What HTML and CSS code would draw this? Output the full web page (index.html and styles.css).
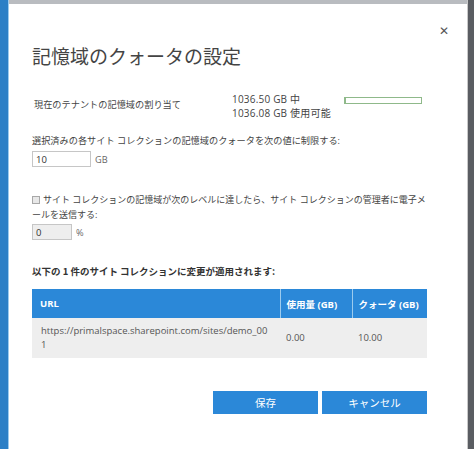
FILE: index.html
```html
<!DOCTYPE html>
<html lang="ja">
<head>
  <meta charset="UTF-8" />
  <title>記憶域のクォータの設定</title>
  <link rel="stylesheet" href="styles.css">
</head>
<body>
  <div class="edge-left"></div>
  <div class="center">
    <div class="top-strip"></div>
    <div class="dialog">
      <button class="close">&#x2715;</button>
      <h1>記憶域のクォータの設定</h1>

      <div class="tenant-row">
        <div class="tenant-label">現在のテナントの記憶域の割り当て</div>
        <div class="tenant-values">
          <div>1036.50 GB 中</div>
          <div>1036.08 GB 使用可能</div>
        </div>
        <div class="usage-bar"><div class="usage-fill"></div></div>
      </div>

      <label class="field-label">選択済みの各サイト コレクションの記憶域のクォータを次の値に制限する:</label>
      <div class="field-row">
        <input type="text" class="quota-input" value="10" />
        <span class="unit">GB</span>
      </div>

      <div class="check-text"><span class="check-box"></span>サイト コレクションの記憶域が次のレベルに達したら、サイト コレクションの管理者に電子メールを送信する:</div>
      <div class="field-row">
        <input type="text" class="warn-input" value="0" disabled />
        <span class="unit">%</span>
      </div>

      <h2>以下の 1 件のサイト コレクションに変更が適用されます:</h2>
      <table class="sites">
        <thead>
          <tr>
            <th class="col-url">URL</th>
            <th class="col-used">使用量 (GB)</th>
            <th class="col-quota">クォータ (GB)</th>
          </tr>
        </thead>
        <tbody>
          <tr>
            <td class="url-cell">https://primalspace.sharepoint.com/sites/demo_001</td>
            <td>0.00</td>
            <td>10.00</td>
          </tr>
        </tbody>
      </table>

      <div class="actions">
        <button class="btn">保存</button>
        <button class="btn">キャンセル</button>
      </div>
    </div>
  </div>
  <div class="edge-right"></div>
</body>
</html>
```

FILE: styles.css
```css
* {
  margin: 0;
  padding: 0;
  box-sizing: border-box;
}
html, body {
  height: 100%;
}
body {
  display: flex;
  font-family: 'Open Sans', 'Noto Sans CJK JP', sans-serif;
  font-size: 9.2px;
  color: #444444;
  background: #ffffff;
  overflow: hidden;
}
.edge-left {
  width: 9px;
  background: #2b7fc6;
  border-right: 1px solid #9ccbee;
}
.edge-right {
  width: 7px;
  background: #5a5d62;
  border-left: 1px solid #c9c9c9;
}
.center {
  flex: 1;
  display: flex;
  flex-direction: column;
}
.top-strip {
  height: 4px;
  background: #b9bcc0;
}
.dialog {
  position: relative;
  flex: 1;
  background: #ffffff;
  padding: 38px 0 0 23px;
}
.close {
  position: absolute;
  top: 20px;
  right: 18px;
  border: none;
  background: none;
  font-size: 12px;
  color: #555555;
  font-family: 'DejaVu Sans', sans-serif;
}
h1 {
  font-family: 'Noto Sans CJK JP', sans-serif;
  font-size: 19px;
  font-weight: 400;
  color: #444444;
  margin-bottom: 23px;
}
.tenant-row {
  display: flex;
  align-items: flex-start;
  margin-left: 2px;
  margin-bottom: 13px;
}
.tenant-label {
  width: 198px;
  padding-top: 5px;
}
.tenant-values {
  width: 112px;
  line-height: 14px;
  font-size: 10px;
  letter-spacing: 0.2px;
}
.usage-bar {
  margin-top: 5px;
  width: 78px;
  height: 7px;
  border: 1px solid #8fb98a;
  background: #ffffff;
}
.usage-fill {
  width: 1%;
  height: 100%;
  background: #8fb98a;
}
.field-label {
  display: block;
  margin-bottom: 4px;
}
.field-row {
  display: flex;
  align-items: center;
  gap: 4px;
}
.field-row input {
  font-family: 'Open Sans', sans-serif;
  font-size: 9.5px;
  color: #333333;
  padding: 0 3px;
  height: 16px;
  border: 1px solid #c6c6c6;
}
.quota-input {
  width: 59px;
}
.warn-input {
  width: 40px;
  background: #eeeeee;
  color: #666666;
}
.unit {
  color: #666666;
}
.check-text {
  margin-top: 25px;
  width: 400px;
  font-size: 9px;
  line-height: 15px;
  margin-bottom: 2px;
}
.check-box {
  display: inline-block;
  width: 8px;
  height: 8px;
  border: 1px solid #a8a8a8;
  background: #e8e8e8;
  margin-right: 3px;
  vertical-align: -1px;
}
h2 {
  font-family: 'Noto Sans CJK JP', sans-serif;
  font-size: 9.5px;
  font-weight: 700;
  color: #333333;
  margin-top: 24px;
  margin-bottom: 11px;
}
.sites {
  width: 395px;
  border-collapse: collapse;
  table-layout: fixed;
}
.sites th {
  background: #2b88d8;
  color: #ffffff;
  font-size: 9.5px;
  font-weight: 700;
  text-align: left;
  height: 29px;
  padding: 0 8px;
  white-space: nowrap;
  border-left: 1px solid #9ccbee;
}
.sites th:first-child {
  border-left: none;
}
.sites th.col-used,
.sites th.col-quota {
  padding: 0 6px;
}
.sites td {
  background: #eeeeee;
  font-size: 9.5px;
  color: #555555;
  height: 40px;
  padding: 0 6px;
  line-height: 14px;
}
.sites td.url-cell {
  padding: 0 9px 0 9px;
  word-break: break-all;
}
.col-url {
  width: 248px;
}
.col-used {
  width: 72px;
}
.actions {
  display: flex;
  justify-content: flex-end;
  gap: 4px;
  width: 395px;
  margin-top: 33px;
}
.btn {
  width: 105px;
  height: 23px;
  background: #2b88d8;
  border: none;
  color: #ffffff;
  font-family: 'Noto Sans CJK JP', sans-serif;
  font-size: 10.5px;
}
```
